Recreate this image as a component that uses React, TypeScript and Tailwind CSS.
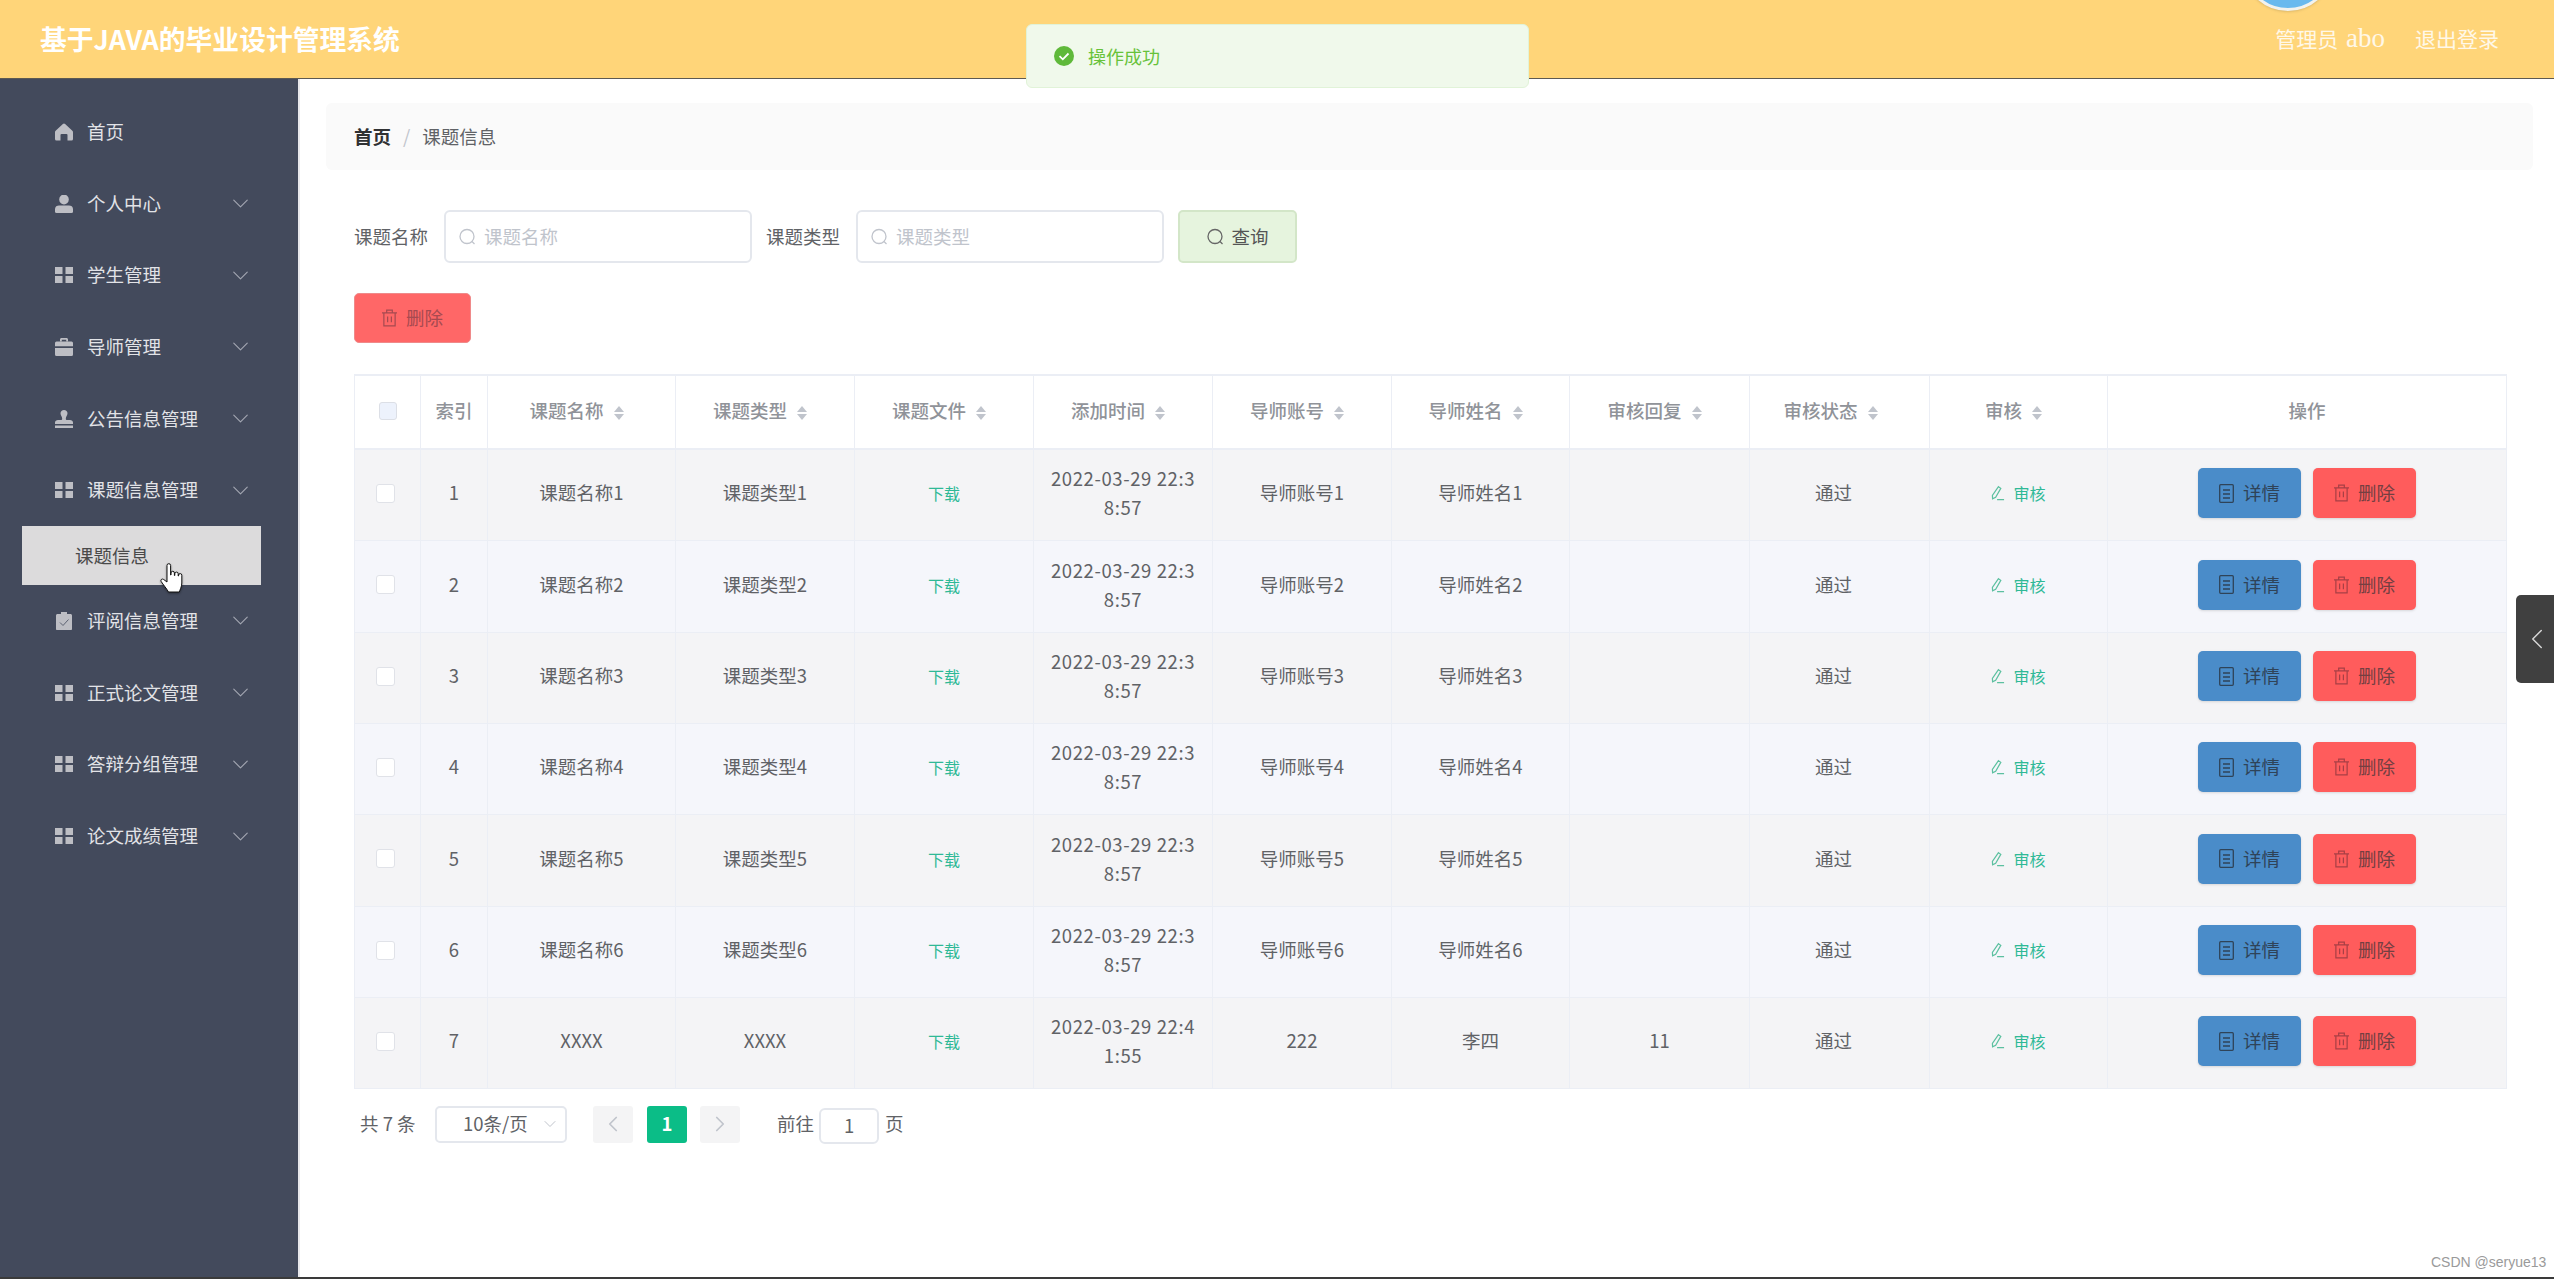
import { ChevronDown, ChevronLeft, ChevronRight } from "lucide-react";

const FONT = { fontFamily: '"Noto Sans CJK SC", "Noto Sans", sans-serif' };

function HomeIcon() {
  return (
    <svg viewBox="0 0 18 18" className="w-[18px] h-[18px]" fill="#bdbec4">
      <path d="M9 .5c.4 0 .8.2 1.1.5l7 6.6c.6.6.9 1 .9 1.9V16a1.5 1.5 0 0 1-1.5 1.500H12.500V12a1 1 0 0 0-1-1h-5a1 1 0 0 0-1 1v5.500H1.500A1.500 1.500 0 0 1 0 16V9.500c0-.9.3-1.300.9-1.900l7-6.600c.3-.3.700-.5 1.100-.5Z" />
    </svg>
  );
}

function UserIcon() {
  return (
    <svg viewBox="0 0 18 18" className="w-[18px] h-[18px]" fill="#bdbec4">
      <ellipse cx="9" cy="4.500" rx="4.800" ry="5" />
      <path d="M0 14c0-2.500 2-3.500 4-3.500h10c2 0 4 1 4 3.500v2.500a1.500 1.500 0 0 1-1.500 1.500h-15A1.500 1.500 0 0 1 0 16.500Z" />
    </svg>
  );
}

function GridIcon() {
  return (
    <svg viewBox="0 0 18 18" className="w-[18px] h-[18px]" fill="#bdbec4">
      <rect x="0" y="1" width="7.500" height="7" />
      <rect x="10.500" y="1" width="7.500" height="7" />
      <rect x="0" y="10" width="7.500" height="7" />
      <rect x="10.500" y="10" width="7.500" height="7" />
    </svg>
  );
}

function CaseIcon() {
  return (
    <svg viewBox="0 0 18 18" className="w-[18px] h-[18px]" fill="#bdbec4">
      <path d="M5 3.500V1.500C5 .7 5.700 0 6.500 0h5C12.300 0 13 .7 13 1.500v2h-1.800V1.800H6.800v1.700Z" />
      <path d="M0 5a1.500 1.500 0 0 1 1.500-1.500h15A1.500 1.500 0 0 1 18 5v3.200H0ZM0 10h18v6.500a1.500 1.500 0 0 1-1.500 1.500h-15A1.500 1.500 0 0 1 0 16.500Z" />
    </svg>
  );
}

function StampIcon() {
  return (
    <svg viewBox="0 0 18 18" className="w-[18px] h-[18px]" fill="#bdbec4">
      <path d="M9 0c2 0 3.500 1.400 3.500 3.300 0 2.200-1.700 3.500-1.700 5.500 0 .6.200 1.200.700 1.200H15c1.600 0 3 1 3 2.500V14H0v-1.500C0 11 1.400 10 3 10h3.500c.5 0 .7-.6.700-1.200 0-2-1.700-3.300-1.700-5.500C5.500 1.400 7 0 9 0Z" />
      <rect x="0" y="15.500" width="18" height="2.500" />
    </svg>
  );
}

function ClaimIcon() {
  return (
    <svg viewBox="0 0 18 18" className="w-[18px] h-[18px]">
      <path fill="#bdbec4" d="M6 0h6v2h3.500c.8 0 1.500.7 1.500 1.500V17c0 .6-.5 1-1 1H2c-.6 0-1-.4-1-1V3.500C1 2.700 1.700 2 2.500 2H6Z" />
      <path fill="none" stroke="#5c6272" strokeWidth="1" d="M5 10.500 8 13.500 13.500 7.500" />
    </svg>
  );
}

function SearchIcon({ color }: { color: string }) {
  return (
    <svg viewBox="0 0 18 18" className="w-[19px] h-[18px] shrink-0" fill="none" stroke={color} strokeWidth="1.300">
      <circle cx="8.500" cy="8.500" r="7" />
      <path d="M13.500 13.500 16 16" />
    </svg>
  );
}

function TrashIcon({ color }: { color: string }) {
  return (
    <svg viewBox="0 0 16 19" className="w-[15px] h-[18px] shrink-0" fill="none" stroke={color} strokeWidth="1.300">
      <path d="M0 4h16M5 4V1h6v3M2 4v14h12V4M6 8v6M10 8v6" />
    </svg>
  );
}

function DocIcon({ color }: { color: string }) {
  return (
    <svg viewBox="0 0 15 19" className="w-[15px] h-[19px] shrink-0" fill="none" stroke={color} strokeWidth="1.300">
      <rect x=".7" y=".7" width="13.600" height="17.600" rx="1" />
      <path d="M4 6h7M4 10h7M4 14h7" />
    </svg>
  );
}

function PenIcon() {
  return (
    <svg viewBox="0 0 15 16" className="w-[14px] h-[16px] shrink-0" fill="none" stroke="#5cc0a0" strokeWidth="1.300">
      <path d="M8 1.200 10.500 3 5 12.500l-3.300 1.800L1.500 10.500ZM6.500 15H14" />
    </svg>
  );
}

function Carets() {
  return (
    <span className="inline-flex flex-col gap-[2px] ml-[10px] align-middle">
      <span className="w-0 h-0 border-x-[5.500px] border-x-transparent border-b-[6.500px] border-b-[#c0c4cc]" />
      <span className="w-0 h-0 border-x-[5.500px] border-x-transparent border-t-[6.500px] border-t-[#c0c4cc]" />
    </span>
  );
}

const menu = [
  { label: "首页", icon: <HomeIcon />, arrow: false },
  { label: "个人中心", icon: <UserIcon />, arrow: true },
  { label: "学生管理", icon: <GridIcon />, arrow: true },
  { label: "导师管理", icon: <CaseIcon />, arrow: true },
  { label: "公告信息管理", icon: <StampIcon />, arrow: true },
  { label: "课题信息管理", icon: <GridIcon />, arrow: true, sub: "课题信息" },
  { label: "评阅信息管理", icon: <ClaimIcon />, arrow: true },
  { label: "正式论文管理", icon: <GridIcon />, arrow: true },
  { label: "答辩分组管理", icon: <GridIcon />, arrow: true },
  { label: "论文成绩管理", icon: <GridIcon />, arrow: true },
];

const columns = [
  { title: "课题名称", w: "w-[188px]" },
  { title: "课题类型", w: "w-[179px]" },
  { title: "课题文件", w: "w-[179px]" },
  { title: "添加时间", w: "w-[179px]" },
  { title: "导师账号", w: "w-[179px]" },
  { title: "导师姓名", w: "w-[178px]" },
  { title: "审核回复", w: "w-[180px]" },
  { title: "审核状态", w: "w-[180px]" },
  { title: "审核", w: "w-[178px]" },
];

const rows = [
  { id: 1, name: "课题名称1", type: "课题类型1", time: "2022-03-29 22:38:57", account: "导师账号1", teacher: "导师姓名1", reply: "" },
  { id: 2, name: "课题名称2", type: "课题类型2", time: "2022-03-29 22:38:57", account: "导师账号2", teacher: "导师姓名2", reply: "" },
  { id: 3, name: "课题名称3", type: "课题类型3", time: "2022-03-29 22:38:57", account: "导师账号3", teacher: "导师姓名3", reply: "" },
  { id: 4, name: "课题名称4", type: "课题类型4", time: "2022-03-29 22:38:57", account: "导师账号4", teacher: "导师姓名4", reply: "" },
  { id: 5, name: "课题名称5", type: "课题类型5", time: "2022-03-29 22:38:57", account: "导师账号5", teacher: "导师姓名5", reply: "" },
  { id: 6, name: "课题名称6", type: "课题类型6", time: "2022-03-29 22:38:57", account: "导师账号6", teacher: "导师姓名6", reply: "" },
  { id: 7, name: "XXXX", type: "XXXX", time: "2022-03-29 22:41:55", account: "222", teacher: "李四", reply: "11" },
];

const thClass = "h-[74px] border-r border-b-2 border-[#ebeef5] text-center font-medium text-[#909399] p-0 pb-[2px]";
const tdClass = "border-r border-b border-[#ebeef5] text-center p-0 pb-[3px]";

function SearchField({ placeholder }: { placeholder: string }) {
  return (
    <div className="w-[308px] h-[53px] flex items-center gap-[7px] pl-[12px] border-2 border-[#e4e7ed] rounded-[6px] bg-white text-[#c0c4cc]">
      <SearchIcon color="#c0c4cc" />
      <span>{placeholder}</span>
    </div>
  );
}

export default function App() {
  return (
    <div className="relative w-[2554px] h-[1279px] overflow-hidden bg-white flex flex-col text-[18.5px] text-[#606266]" style={FONT}>
      <header className="relative h-[79px] shrink-0 flex items-center justify-between pl-[40px] pr-[55px] bg-[#ffd579] border-b border-[#5d5a52] overflow-hidden">
        <div className="text-[26.800px] font-bold text-white">基于JAVA的毕业设计管理系统</div>
        <div className="flex items-center gap-[30px] text-[21px] text-[#fff8e8]">
          <span>
            管理员 <span className="ml-[3px] text-[27px] leading-none" style={{ fontFamily: '"Liberation Serif", serif' }}>abo</span>
          </span>
          <span>退出登录</span>
        </div>
        <div className="absolute left-[2242px] top-[-81px] w-[92px] h-[92px] rounded-full border-[3px] border-[#f2f2ee] bg-[#69b9ee] shadow" />
      </header>

      <div className="flex-1 min-h-0 flex">
        <aside className="w-[300px] shrink-0 pt-[17px] bg-[#434a5c] border-r-2 border-[#e8e8ec] text-[#e2e3e7]">
          {menu.map((item) => (
            <div key={item.label}>
              <div className="h-[71.7px] flex items-center pl-[55px] pr-[44px]">
                <span className="w-[18px] h-[18px] flex">{item.icon}</span>
                <span className="ml-[14px]">{item.label}</span>
                {item.arrow && <ChevronDown className="ml-auto w-[27px] h-[27px] text-[#a3a7b2]" strokeWidth={1} />}
              </div>
              {item.sub && (
                <div className="ml-[22px] w-[239px] h-[59px] flex items-center pl-[53px] bg-[#dcdbdc] text-[#4a4a4a]">{item.sub}</div>
              )}
            </div>
          ))}
        </aside>

        <main className="flex-1 min-w-0 pt-[24px] pl-[26px] pr-[21px]">
          <div className="h-[67px] flex items-center pl-[28px] rounded-[6px] bg-[#fafafa]">
            <span className="font-bold text-[#303133]">首页</span>
            <span className="mx-[12px] text-[#c0c4cc]">/</span>
            <span>课题信息</span>
          </div>

          <div className="pl-[28px] pr-[27px]">
            <div className="mt-[40px] flex items-center">
              <span className="w-[90px]">课题名称</span>
              <SearchField placeholder="课题名称" />
              <span className="ml-[14px] w-[90px]">课题类型</span>
              <SearchField placeholder="课题类型" />
              <button className="ml-[14px] w-[119px] h-[53px] flex items-center justify-center gap-[6px] rounded-[5px] border-2 border-[#d3e6c8] bg-[#e6f4de] text-[#555]">
                <SearchIcon color="#666" />
                查询
              </button>
            </div>

            <button className="mt-[30px] w-[117px] h-[50px] flex items-center justify-center gap-[9px] rounded-[5px] border border-[#ef8a8a] bg-[#ff6767] text-[#a64a50]">
              <TrashIcon color="#a64a50" />
              删除
            </button>

            <table className="mt-[31px] w-[2152px] table-fixed border-collapse border-t-2 border-l border-[#ebeef5]">
              <thead>
                <tr>
                  <th className={thClass + " w-[66px]"}>
                    <span className="block mx-auto w-[18px] h-[18px] rounded-[3px] border border-[#dcdfe6] bg-[#edf2fc]" />
                  </th>
                  <th className={thClass + " w-[67px]"}>索引</th>
                  {columns.map((c) => (
                    <th key={c.title} className={thClass + " " + c.w + (c.title === "审核状态" ? " pr-[18px]" : " pr-[10px]")}>
                      {c.title}
                      <Carets />
                    </th>
                  ))}
                  <th className={thClass + " w-[399px]"}>操作</th>
                </tr>
              </thead>
              <tbody>
                {rows.map((r) => (
                  <tr key={r.id} className={(r.id % 2 === 1 ? "bg-[#f4f4f6]" : "bg-[#f5f6fb]") + (r.id === 2 || r.id === 5 ? " h-[92px]" : " h-[91px]")}>
                    <td className={tdClass}>
                      <span className="block ml-[21px] w-[19px] h-[19px] rounded-[3px] border border-[#e0e2e8] bg-white" />
                    </td>
                    <td className={tdClass}>{r.id}</td>
                    <td className={tdClass}>{r.name}</td>
                    <td className={tdClass}>{r.type}</td>
                    <td className={tdClass}>
                      <span className="block text-[16px] text-[#2fb996]">下载</span>
                    </td>
                    <td className={tdClass + " px-[14px] leading-[29px] break-all tracking-[0.6px]"}>{r.time}</td>
                    <td className={tdClass}>{r.account}</td>
                    <td className={tdClass}>{r.teacher}</td>
                    <td className={tdClass}>{r.reply}</td>
                    <td className={tdClass + " pr-[12px]"}>通过</td>
                    <td className={tdClass}>
                      <span className="flex items-center justify-center gap-[8px] text-[16px] text-[#2fb996]">
                        <PenIcon />
                        审核
                      </span>
                    </td>
                    <td className={tdClass}>
                      <div className="flex justify-center gap-[12px]">
                        <button className="w-[103px] h-[50px] flex items-center justify-center gap-[9px] rounded-[5px] bg-[#4a8cc9] text-[#2f4358] shadow-sm">
                          <DocIcon color="#2f4358" />
                          详情
                        </button>
                        <button className="w-[103px] h-[50px] flex items-center justify-center gap-[9px] rounded-[5px] bg-[#ff5c5c] text-[#743f42] shadow-sm">
                          <TrashIcon color="#a83f45" />
                          删除
                        </button>
                      </div>
                    </td>
                  </tr>
                ))}
              </tbody>
            </table>

            <div className="mt-[17px] flex items-start h-[38px] text-[18.500px]">
              <span className="ml-[6px] w-[55px] h-[37px] flex items-center whitespace-nowrap">共 7 条</span>
              <div className="ml-[20px] w-[132px] h-[37px] flex items-center pl-[26px] pr-[5px] border-2 border-[#e4e7ed] rounded-[5px]">
                <span>10条/页</span>
                <ChevronDown className="ml-auto w-[20px] h-[20px] text-[#c0c4cc]" strokeWidth={1.200} />
              </div>
              <div className="ml-[26px] w-[40px] h-[37px] flex items-center justify-center rounded-[3px] bg-[#f4f4f5] text-[#c0c4cc]">
                <ChevronLeft className="w-[26px] h-[26px]" strokeWidth={1.600} />
              </div>
              <div className="ml-[14px] w-[40px] h-[37px] flex items-center justify-center rounded-[3px] bg-[#0bbd87] font-bold text-white">1</div>
              <div className="ml-[13px] w-[40px] h-[37px] flex items-center justify-center rounded-[3px] bg-[#f4f4f5] text-[#c0c4cc]">
                <ChevronRight className="w-[26px] h-[26px]" strokeWidth={1.600} />
              </div>
              <span className="ml-[37px] h-[37px] flex items-center">前往</span>
              <div className="ml-[5px] mt-[2px] w-[60px] h-[36px] flex items-center justify-center border-2 border-[#e4e7ed] rounded-[6px]">1</div>
              <span className="ml-[6px] h-[37px] flex items-center">页</span>
            </div>
          </div>
        </main>
      </div>

      <div className="h-[2px] shrink-0 bg-[#3a3a3a]" />

      <div className="absolute left-[1026px] top-[24px] w-[503px] h-[64px] flex items-center pl-[27px] rounded-[6px] border border-[#e1f3d8] bg-[#f0f9eb] text-[#67c23a]">
        <svg viewBox="0 0 20 20" className="w-[20px] h-[20px]">
          <circle cx="10" cy="10" r="10" fill="#5fb93a" />
          <path d="M5.500 10.200 8.800 13.300 14.500 7.500" fill="none" stroke="#fff" strokeWidth="1.800" />
        </svg>
        <span className="ml-[14px] text-[18px]">操作成功</span>
      </div>

      <div className="absolute right-0 top-[595px] w-[38px] h-[88px] flex items-center justify-center pl-[3px] rounded-tl-[5px] rounded-bl-[5px] bg-[#404040] text-[#d8d8d8]">
        <ChevronLeft className="w-[34px] h-[34px]" strokeWidth={1} />
      </div>

      <svg viewBox="0 0 24 31" className="absolute left-[160px] top-[563px] w-[24px] h-[31px]" style={{ filter: "drop-shadow(0 1px 1px rgba(0,0,0,.4))" }}>
        <path
          fill="#fff"
          stroke="#111"
          strokeWidth="1"
          d="M7 2.500a1.800 1.800 0 0 1 3.600 0V12h.4V10a1.700 1.700 0 0 1 3.400 0v2.500h.4v-1.700a1.700 1.700 0 0 1 3.400 0V13h.4v-.8a1.600 1.600 0 0 1 3.200 0V20c0 4-2 7-2.500 9H8.500C7 26 3 21.500 1.200 18.500c-1-1.600.8-3.300 2.500-2L7 19Z"
        />
      </svg>

      <div className="absolute left-[2431px] top-[1252px] text-[14px] text-[#9a9a9a]" style={{ fontFamily: '"Liberation Sans", sans-serif' }}>
        CSDN @seryue13
      </div>
    </div>
  );
}
